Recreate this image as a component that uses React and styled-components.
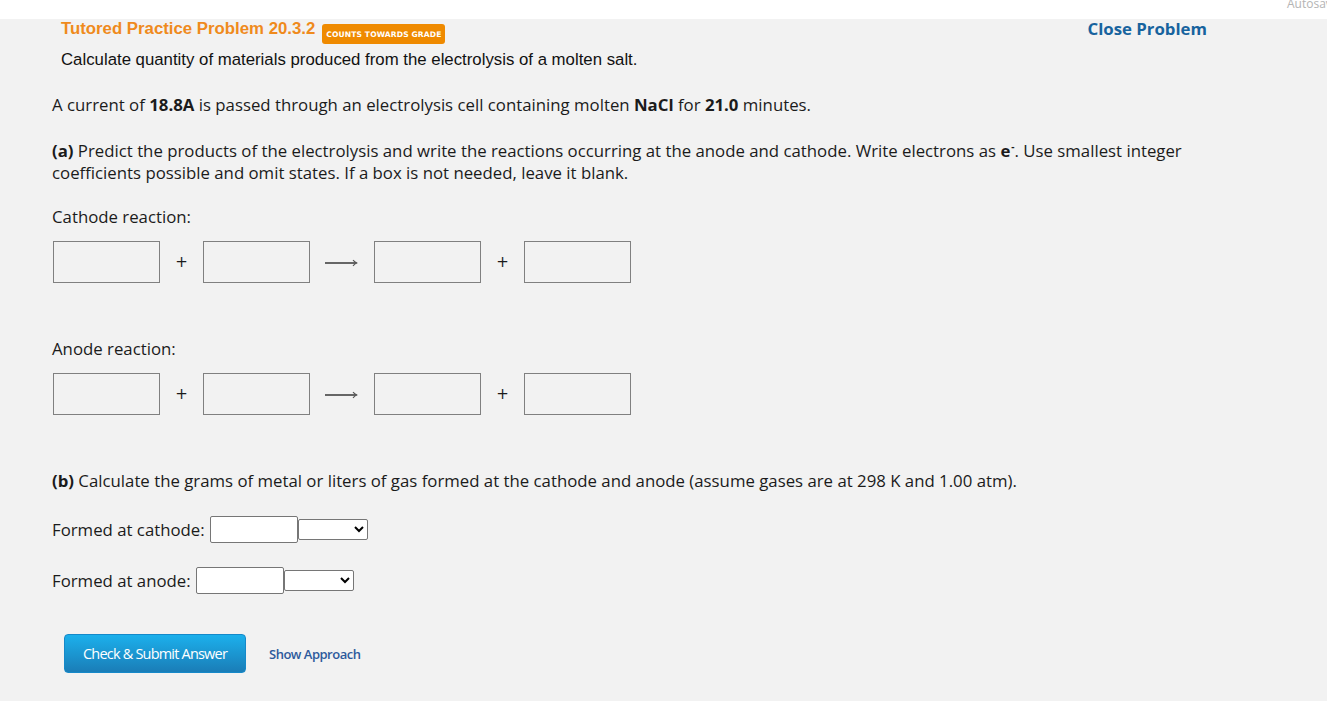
import React from 'react';
import styled, { createGlobalStyle } from 'styled-components';

const GlobalStyle = createGlobalStyle`
  html, body {
    margin: 0;
    padding: 0;
    background: #ffffff;
    overflow: hidden;
  }
  body {
    font-family: "Open Sans", "Liberation Sans", sans-serif;
    color: #1b1b1b;
  }
`;

const TopBar = styled.div`
  height: 19px;
  background: #ffffff;
  display: flex;
  padding-left: 1287px;
  white-space: nowrap;
  overflow: hidden;
`;

const Autosave = styled.span`
  font-family: "Open Sans", sans-serif;
  font-size: 12px;
  line-height: 14px;
  color: #b4b4b4;
  margin-top: -3px;
`;

const Panel = styled.div`
  background: #f2f2f2;
  height: calc(100vh - 19px);
`;

const Header = styled.div`
  display: flex;
  align-items: center;
  justify-content: space-between;
  padding: 0 120px 0 61px;
  height: 20px;
`;

const TitleGroup = styled.div`
  display: flex;
  align-items: center;
  gap: 7px;
`;

const Title = styled.h1`
  margin: 0;
  font-family: "Liberation Sans", Arial, sans-serif;
  font-weight: bold;
  font-size: 16.8px;
  line-height: 20px;
  color: #ef8a1c;
`;

const Badge = styled.span`
  display: inline-flex;
  align-items: center;
  height: 20px;
  margin-top: 10px;
  padding: 0 4px;
  background: #ef8a00;
  border-radius: 3px;
  color: #ffffff;
  font-family: "DejaVu Sans", "Liberation Sans", sans-serif;
  font-weight: bold;
  font-size: 7.6px;
  letter-spacing: 0.1px;
  text-transform: uppercase;
`;

const CloseLink = styled.a`
  font-family: "Open Sans", sans-serif;
  font-weight: bold;
  font-size: 16.8px;
  line-height: 20px;
  color: #17639e;
  text-decoration: none;
  cursor: pointer;
`;

const Subtitle = styled.p`
  margin: 11px 0 0 61px;
  font-family: "Liberation Sans", Arial, sans-serif;
  font-size: 16.8px;
  line-height: 20px;
  color: #111111;
`;

const Content = styled.div`
  padding-left: 52px;
  width: 1150px;
`;

const Para = styled.p`
  margin: ${p => p.$top}px 0 0 0;
  font-size: 16.8px;
  line-height: 22px;
`;

const Sup = styled.span`
  position: relative;
  top: -7px;
  font-size: 10px;
  line-height: 0;
  margin-left: 1px;
`;

const Label = styled.div`
  margin-top: ${p => p.$top}px;
  font-size: 16.8px;
  line-height: 22px;
`;

const Equation = styled.div`
  display: flex;
  align-items: center;
  margin-top: 13px;
  margin-left: 1px;
  height: 42px;
`;

const Slot = styled.div`
  width: 107px;
  height: 42px;
  box-sizing: border-box;
  border: 1px solid #808080;
`;

const Plus = styled.span`
  width: ${p => p.$w}px;
  text-align: center;
  font-family: "DejaVu Sans", sans-serif;
  font-size: 15px;
  color: #1b1b1b;
`;

const ArrowWrap = styled.span`
  display: flex;
  align-items: center;
  margin: 2px 16px 0 15px;
`;

const AnswerRow = styled.div`
  display: flex;
  align-items: center;
  margin-top: ${p => p.$top}px;
  font-size: 16.8px;
  height: 27px;
`;

const AnswerInput = styled.input`
  width: 88px;
  height: 27px;
  box-sizing: border-box;
  margin-left: 5px;
  border: 1px solid #767676;
  border-radius: 2px;
  background: #ffffff;
  padding: 0 4px;
`;

const UnitSelect = styled.select`
  width: 70px;
  height: 21px;
  box-sizing: border-box;
  border: 1px solid #767676;
  border-radius: 2px;
  background: #ffffff;
`;

const Actions = styled.div`
  display: flex;
  align-items: center;
  gap: 23px;
  margin: 40px 0 0 12px;
`;

const SubmitButton = styled.button`
  width: 182px;
  height: 39px;
  border: 1px solid #1689c9;
  border-radius: 4px;
  background: linear-gradient(to bottom, #1cb0ec, #1a7db7);
  color: #ffffff;
  font-family: "Open Sans", sans-serif;
  font-size: 14.5px;
  letter-spacing: -0.8px;
  cursor: pointer;
`;

const ApproachLink = styled.a`
  font-family: "Open Sans", sans-serif;
  font-weight: 600;
  font-size: 13px;
  letter-spacing: -0.5px;
  color: #2d5a9c;
  cursor: pointer;
`;

const Arrow = () => (
  <svg width="33" height="10" viewBox="0 0 33 10">
    <line x1="0" y1="5" x2="31" y2="5" stroke="#666" strokeWidth="2" />
    <path d="M28 2.2 Q30 4.6 32.3 5 Q30 5.4 28 7.8" stroke="#555" strokeWidth="1.1" fill="none" />
  </svg>
);

const ReactionRow = () => (
  <Equation>
    <Slot />
    <Plus $w={43}>+</Plus>
    <Slot />
    <ArrowWrap><Arrow /></ArrowWrap>
    <Slot />
    <Plus $w={43}>+</Plus>
    <Slot />
  </Equation>
);

const units = ['', 'g', 'L'];

const App = () => (
  <>
    <GlobalStyle />
    <TopBar>
      <Autosave>Autosave</Autosave>
    </TopBar>
    <Panel>
      <Header>
        <TitleGroup>
          <Title>Tutored Practice Problem 20.3.2</Title>
          <Badge>Counts Towards Grade</Badge>
        </TitleGroup>
        <CloseLink>Close Problem</CloseLink>
      </Header>
      <Subtitle>Calculate quantity of materials produced from the electrolysis of a molten salt.</Subtitle>
      <Content>
        <Para $top={24}>
          A current of <b>18.8A</b> is passed through an electrolysis cell containing molten <b>NaCl</b> for <b>21.0</b> minutes.
        </Para>
        <Para $top={24}>
          <b>(a)</b> Predict the products of the electrolysis and write the reactions occurring at the anode and cathode. Write electrons as <b>e<Sup>-</Sup></b>. Use smallest integer coefficients possible and omit states. If a box is not needed, leave it blank.
        </Para>
        <Label $top={22}>Cathode reaction:</Label>
        <ReactionRow />
        <Label $top={55}>Anode reaction:</Label>
        <ReactionRow />
        <Para $top={55}>
          <b>(b)</b> Calculate the grams of metal or liters of gas formed at the cathode and anode (assume gases are at 298 K and 1.00 atm).
        </Para>
        <AnswerRow $top={24}>
          Formed at cathode:
          <AnswerInput />
          <UnitSelect>{units.map(u => <option key={u}>{u}</option>)}</UnitSelect>
        </AnswerRow>
        <AnswerRow $top={24}>
          Formed at anode:
          <AnswerInput />
          <UnitSelect>{units.map(u => <option key={u}>{u}</option>)}</UnitSelect>
        </AnswerRow>
        <Actions>
          <SubmitButton>Check &amp; Submit Answer</SubmitButton>
          <ApproachLink>Show Approach</ApproachLink>
        </Actions>
      </Content>
    </Panel>
  </>
);

export default App;
